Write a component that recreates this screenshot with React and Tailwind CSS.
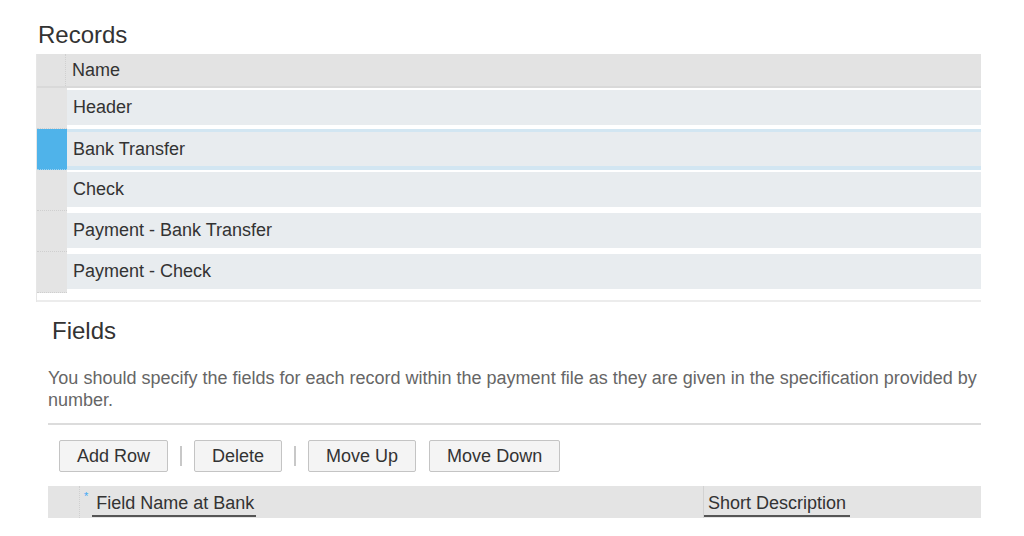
import React from "react";

const rows = ["Header", "Bank Transfer", "Check", "Payment - Bank Transfer", "Payment - Check"];

function Row({ label, selected }) {
  return (
    <div className="flex h-[41px]">
      <div
        className={
          "w-[30px] shrink-0 border-b border-dotted " +
          (selected ? "bg-[#4fb3ea] border-[#9fd2ef]" : "bg-[#e4e4e4] border-[#cfcfcf]")
        }
      />
      <div
        className={
          "flex-1 flex items-center pl-[6px] text-[18px] text-[#333] " +
          (selected
            ? "bg-[#e8ecef] border-t-[3px] border-b-[4px] border-[#d2e6f2]"
            : "bg-[#e8ecef] border-t-[2px] border-b-[4px] border-white")
        }
      >
        {label}
      </div>
    </div>
  );
}

function Btn({ children }) {
  return (
    <button className="h-[32px] px-[17px] bg-[#f4f4f4] border border-[#c4c4c4] rounded-[2px] text-[18px] text-[#333] leading-none">
      {children}
    </button>
  );
}

function Sep() {
  return <div className="w-[2px] h-[20px] bg-[#c8c8c8] mx-[12px]" />;
}

export default function App() {
  return (
    <div
      className="w-[1024px] h-[536px] bg-white overflow-hidden"
      style={{ fontFamily: '"Liberation Sans", Arial, sans-serif' }}
    >
      <div className="pt-[21px] pl-[38px] text-[24px] leading-[28px] text-[#333]">Records</div>
      <div className="mt-[5px] ml-[36px] w-[945px] border-l border-[#e6e6e6]">
        <div className="flex h-[34px] bg-[#e3e3e3] border-b-[2px] border-[#d9d9d9]">
          <div className="w-[29px] border-r border-dotted border-[#d0d0d0]" />
          <div className="flex items-center pl-[6px] text-[18px] text-[#333]">Name</div>
        </div>
        {rows.map((r, i) => (
          <Row key={r} label={r} selected={i === 1} />
        ))}
        <div className="h-[9px] border-b-[2px] border-[#ececec]" />
      </div>

      <div className="pt-[15px] pl-[52px] text-[24px] leading-[28px] text-[#333]">Fields</div>
      <div className="ml-[48px] w-[933px] overflow-hidden">
        <div className="mt-[22px] text-[18px] leading-[22px] text-[#666] whitespace-nowrap">
          You should specify the fields for each record within the payment file as they are given in the specification provided by your bank and in the correct sequence
          <br />
          number.
        </div>
        <div className="mt-[12px] h-[2px] bg-[#dcdcdc]" />
        <div className="mt-[15px] ml-[11px] flex items-center">
          <Btn>Add Row</Btn>
          <Sep />
          <Btn>Delete</Btn>
          <Sep />
          <Btn>Move Up</Btn>
          <div className="w-[13px]" />
          <Btn>Move Down</Btn>
        </div>
        <div className="mt-[14px] flex h-[32px] bg-[#e4e4e4]">
          <div className="w-[32px] shrink-0 border-r border-dotted border-[#d0d0d0]" />
          <div className="w-[624px] shrink-0 flex items-end border-r border-[#d2d2d2]">
            <span className="ml-[4px] self-start mt-[2px] text-[11px] text-[#3fa9f5]">*</span>
            <span className="ml-[4px] text-[18px] text-[#333] border-b-[2px] border-[#555] mb-[1px] leading-[24px] pl-[4px] pr-[2px]">
              Field Name at Bank
            </span>
          </div>
          <div className="flex items-end">
            <span className="text-[18px] text-[#333] border-b-[2px] border-[#555] mb-[1px] leading-[24px] pl-[4px] pr-[4px]">
              Short Description
            </span>
          </div>
        </div>
      </div>
    </div>
  );
}
